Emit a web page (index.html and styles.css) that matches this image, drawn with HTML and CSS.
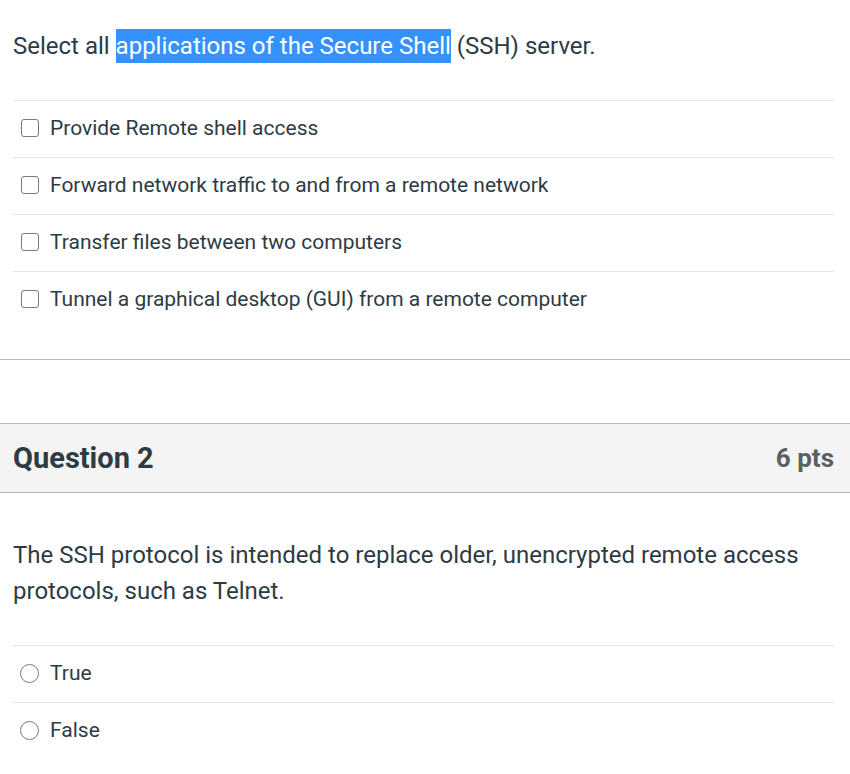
FILE: index.html
```html
<!DOCTYPE html>
<html>
<head>
<meta charset="utf-8">
<link rel="stylesheet" href="styles.css">
</head>
<body>
<section class="q q1">
  <p class="q-text">Select all <span class="hl">applications of the Secure Shell</span> (SSH) server.</p>
  <ul class="answers">
    <li class="answer"><span class="box"></span><span class="label">Provide Remote shell access</span></li>
    <li class="answer"><span class="box"></span><span class="label">Forward network traffic to and from a remote network</span></li>
    <li class="answer"><span class="box"></span><span class="label">Transfer files between two computers</span></li>
    <li class="answer"><span class="box"></span><span class="label">Tunnel a graphical desktop (GUI) from a remote computer</span></li>
  </ul>
</section>
<header class="q-header">
  <h2 class="q-title">Question 2</h2>
  <span class="q-pts">6 pts</span>
</header>
<section class="q q2">
  <p class="q-text">The SSH protocol is intended to replace older, unencrypted remote access protocols, such as Telnet.</p>
  <ul class="answers">
    <li class="answer"><span class="radio"></span><span class="label">True</span></li>
    <li class="answer"><span class="radio"></span><span class="label">False</span></li>
  </ul>
</section>
</body>
</html>
```
FILE: styles.css
```css
html, body {
  margin: 0;
  padding: 0;
  background: #fff;
}
body {
  font-family: Roboto, "Liberation Sans", Arial, sans-serif;
  color: #2d3b45;
}
.q {
  padding: 0 16px 0 13px;
}
.q1 {
  padding-top: 27px;
  padding-bottom: 31px;
  border-bottom: 1px solid #b5b9bc;
}
.q-text {
  margin: 0;
  font-size: 24px;
  line-height: 36px;
}
.hl {
  background: #3592fd;
  color: #fff;
  display: inline-block;
  line-height: 34px;
  margin-top: 2px;
}
.answers {
  list-style: none;
  margin: 36px 0 0;
  padding: 0;
}
.answer {
  display: flex;
  align-items: center;
  gap: 11px;
  height: 53px;
  padding-bottom: 3px;
  border-top: 1px solid #e2e4e5;
  padding-left: 8px;
  font-size: 21px;
}
.box {
  width: 16px;
  height: 16px;
  border: 1px solid #7a7a7a;
  border-radius: 3px;
  flex: none;
}
.radio {
  width: 17px;
  height: 17px;
  border: 1px solid #7a7a7a;
  border-radius: 50%;
  flex: none;
  margin-top: 2px;
}
.q-header {
  margin-top: 63px;
  height: 68px;
  background: #f4f4f4;
  border-top: 1px solid #b5b9bc;
  border-bottom: 1px solid #b5b9bc;
  display: flex;
  align-items: center;
  justify-content: space-between;
  padding: 0 16px 0 13px;
}
.q-title {
  margin: 0;
  font-size: 29px;
  font-weight: 700;
  color: #2d3b45;
}
.q-pts {
  font-size: 26px;
  font-weight: 700;
  color: #5a5f63;
}
.q2 {
  padding-top: 44px;
}
.q2 .answers {
  margin-top: 36px;
}
.q2 .answer {
  padding-left: 7px;
}
```
